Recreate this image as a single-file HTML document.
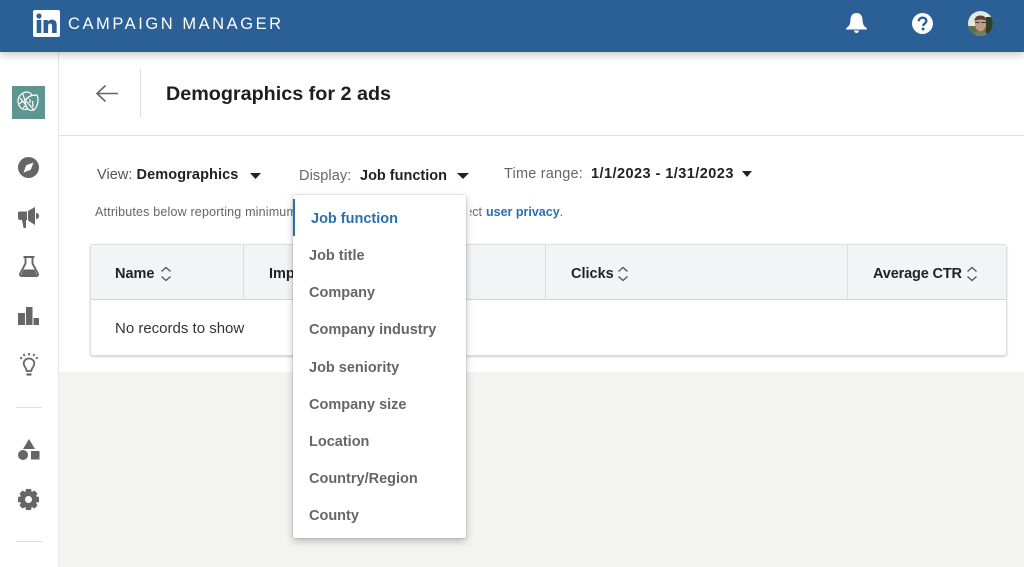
<!DOCTYPE html>
<html><head><meta charset="utf-8"><style>
html,body{margin:0;padding:0;width:1024px;height:567px;overflow:hidden;background:#fff;font-family:"Liberation Sans",sans-serif}
#r{position:relative;width:1024px;height:567px;overflow:hidden}
.a{position:absolute}
.t{position:absolute;white-space:nowrap;line-height:20px;height:20px}
.b{font-weight:700}
.m{font-size:14.5px;color:#666;font-weight:700;left:309px}
.h{font-size:14.5px;font-weight:700;color:#222}
svg{position:absolute;overflow:visible}
</style></head><body><div id="r">
<div class="a" style="left:58px;top:372px;width:966px;height:195px;background:#f3f3f2"></div>
<div class="a" style="left:58px;top:52px;width:1px;height:515px;background:#e6e6e6"></div>
<div class="a" style="left:59px;top:135px;width:965px;height:1px;background:#e0e0e0"></div>
<div class="a" style="left:0;top:0;width:1024px;height:52px;background:#2a6095;box-shadow:0 3px 8px rgba(0,0,0,.22)"></div>

<svg style="left:33px;top:10px" width="27" height="27" viewBox="0 0 27 27"><rect width="27" height="27" rx="2" fill="#fff"/><rect x="3.700" y="10" width="4.600" height="13" fill="#2a6095"/><circle cx="6" cy="6" r="2.600" fill="#2a6095"/><path d="M10.500 10h4.300v1.800c.8-1.300 2.200-2.200 4-2.200 3.500 0 4.900 2.200 4.900 5.600V23h-4.600v-6.800c0-1.600-.5-2.700-2-2.700s-2 1.100-2 2.700V23h-4.600z" fill="#2a6095"/></svg>
<div class="t" style="left:68px;top:14px;font-size:16.5px;color:#fff;letter-spacing:2.550px">CAMPAIGN MANAGER</div>

<svg style="left:846px;top:13px" width="21" height="20" viewBox="0 0 21 20"><path d="M10.500 0C6.800 0 4.700 2.600 4.500 6.500 4.300 10.500 3.500 12.500 1.800 14 .8 14.800 0 15.200 0 16.500h21c0-1.300-.8-1.700-1.800-2.500-1.700-1.500-2.500-3.500-2.700-7.500C16.300 2.600 14.200 0 10.500 0z" fill="#fff"/><path d="M8 17.500h5c-.2 1.500-1.200 2.500-2.500 2.500S8.200 19 8 17.500z" fill="#fff"/></svg>
<svg style="left:912px;top:13px" width="21" height="21" viewBox="0 0 21 21"><circle cx="10.500" cy="10.500" r="10.500" fill="#fff"/><path d="M6.800 8.200c0-2.200 1.700-3.500 3.800-3.500s3.700 1.200 3.700 3.200c0 2.700-3.100 2.700-3.100 5" fill="none" stroke="#2a6095" stroke-width="2.400"/><circle cx="11.100" cy="16" r="1.500" fill="#2a6095"/></svg>
<svg style="left:968px;top:11px" width="25" height="25" viewBox="0 0 25 25"><defs><clipPath id="c"><circle cx="12.500" cy="12.500" r="12.500"/></clipPath></defs><g clip-path="url(#c)"><rect width="25" height="25" fill="#e4e8e0"/><rect y="15" width="25" height="10" fill="#5d6f45"/><path d="M18 6h7v19h-7z" fill="#2f3d2a"/><ellipse cx="12.500" cy="13" rx="5.500" ry="7.500" fill="#c49a80"/><path d="M6.500 10c0-4 3-5.500 6-5.500s6 1.500 6 5.500c-3-2-8-2-12 0z" fill="#5a4336"/><path d="M7 11.500h4.500M13.500 11.500H18" stroke="#333" stroke-width="1"/><path d="M5 25c1-4 4-5 7.500-5s6.500 1 7.500 5z" fill="#6d8068"/></g></svg>

<svg style="left:95px;top:84px" width="24" height="19" viewBox="0 0 24 19"><path d="M23 9.500H2M10.500 1.500 2 9.500l8.500 8" fill="none" stroke="#666" stroke-width="1.600"/></svg>
<div class="a" style="left:140px;top:69px;width:1px;height:49px;background:#e0e0e0"></div>
<div class="t b" style="left:166px;top:84px;font-size:19.75px;color:#1e1e1e">Demographics for 2 ads</div>

<svg style="left:12px;top:86px" width="33" height="33" viewBox="0 0 33 33"><rect width="33" height="33" fill="#5f9590"/><g fill="none" stroke="#fff" stroke-width="1.200"><path d="M6 15c0-4 3-8 8-9 3 0 5 1 6 3-2 1-5 3-7 6 0 3 1 6 3 8-3 1-5 1-7-1-2-2-3-4-3-7z"/><path d="M13 15c2-4 6-6 12-6 2 5 1 11-3 15-3 1-5 0-6-1-2-2-3-5-3-8z"/><path d="M14 15l8 9M18 17v-4M21 21l-.5-6M8 12l6 7M11 8l2 7M7 18l4-3M11 22l3-3"/></g></svg>

<svg style="left:18px;top:157px" width="21" height="21" viewBox="0 0 21 21"><circle cx="10.500" cy="10.500" r="10.500" fill="#666"/><path d="M15.500 5.500 12.800 12.800 5.500 15.500 8.200 8.200z" fill="#fff"/></svg>
<svg style="left:18px;top:207px" width="21" height="21" viewBox="0 0 21 21"><path d="M1.500 4.500H9V13H8V21H5.500L4 13H2C.8 13 0 12 0 11V6C0 5 .6 4.500 1.500 4.500zM10 4 17 0V18L10 13.500zM18 6c2 0 3 1.300 3 3s-1 3-3 3z" fill="#666"/></svg>
<svg style="left:19px;top:256px" width="20" height="21" viewBox="0 0 20 21"><path d="M4.500 1h11M6.500 1v6.500L1.200 17.500C.5 19 1.200 20 2.500 20h15c1.300 0 2-1 1.300-2.500L13.500 7.500V1" fill="none" stroke="#666" stroke-width="1.900"/><path d="M4.500 13.500h11l2.500 5.500H2z" fill="#666"/></svg>
<svg style="left:18px;top:307px" width="21" height="18" viewBox="0 0 21 18"><path d="M0 6h7v12H0zM8 0h6.500v18H8zM15.500 11H21v7h-5.500z" fill="#666"/></svg>
<svg style="left:20px;top:353px" width="18" height="23" viewBox="0 0 18 23"><path d="M9 5.500c-3.200 0-5.300 2.300-5.300 5 0 3.200 2.800 4.200 3 7.500h4.600c.2-3.300 3-4.300 3-7.500 0-2.700-2.100-5-5.300-5z" fill="none" stroke="#666" stroke-width="1.800"/><path d="M6.500 21.500h5" stroke="#666" stroke-width="2.200"/><path d="M9 0v2.500M3.500 1l1.200 2M14.500 1l-1.200 2M0 4.500l2.200 1.100M18 4.500l-2.200 1.100" stroke="#666" stroke-width="1.800"/></svg>
<div class="a" style="left:16px;top:407px;width:26px;height:1px;background:#ddd"></div>
<svg style="left:18px;top:439px" width="21" height="21" viewBox="0 0 21 21"><path d="M11 0 17 10H5z" fill="#666"/><circle cx="5" cy="16" r="5" fill="#666"/><rect x="13" y="12" width="8.500" height="8.500" fill="#666"/></svg>
<svg style="left:18px;top:489px" width="21" height="21" viewBox="0 0 21 21"><path d="M8 0h5l.7 3 2.800-1.500 3 3L18 7.300l3 .7v5l-3 .7 1.500 2.800-3 3-2.800-1.500-.7 3H8l-.7-3-2.800 1.500-3-3L3 13.700 0 13V8l3-.7-1.500-2.800 3-3L7.300 3z" fill="#666"/><circle cx="10.500" cy="10.500" r="3.500" fill="#fff"/></svg>
<div class="a" style="left:16px;top:541px;width:26px;height:1px;background:#ddd"></div>

<div class="t" style="left:97px;top:165px;font-size:14.500px;color:#555;letter-spacing:.05px">View: <span class="b" style="color:#222;letter-spacing:.1px">Demographics</span></div>
<svg style="left:250px;top:173px" width="11" height="6"><path d="M0 0h11L5.500 6z" fill="#222"/></svg>
<div class="t" style="left:299px;top:166px;font-size:14.500px;color:#666;letter-spacing:.1px">Display:</div>
<div class="t b" style="left:360px;top:166px;font-size:14.500px;color:#222">Job function</div>
<svg style="left:457px;top:173px" width="12" height="6"><path d="M0 0h12L6 6z" fill="#222"/></svg>
<div class="t" style="left:504px;top:164px;font-size:14.500px;color:#666;letter-spacing:.2px">Time range:</div>
<div class="t b" style="left:591px;top:164px;font-size:14.500px;color:#222;letter-spacing:.45px">1/1/2023 - 1/31/2023</div>
<svg style="left:742px;top:171px" width="10" height="6"><path d="M0 0h10L5 6z" fill="#222"/></svg>
<div class="t" style="left:95px;top:202px;font-size:12.500px;color:#666;letter-spacing:.18px">Attributes below reporting minimums are hidden to protect</div>
<div class="a" style="left:482px;top:202px;width:12px;height:20px;background:#fff"></div>
<div class="t" style="left:470px;top:202px;font-size:12.500px;color:#666;width:12px;overflow:hidden;direction:rtl">ect</div>
<div class="t b" style="left:486px;top:202px;font-size:12.500px;color:#2a6fb0">user privacy<span style="font-weight:400;color:#666">.</span></div>

<div class="a" style="left:91px;top:245px;width:915px;height:110px;background:#fff;border-radius:2px;box-shadow:0 0 0 1px #dcdcdc,0 1px 2px 1px rgba(0,0,0,.18)"></div>
<div class="a" style="left:91px;top:245px;width:915px;height:54px;background:#f3f4f6;border-bottom:1px solid #d4d4d4"></div>
<div class="a" style="left:243px;top:245px;width:1px;height:54px;background:#dcdcdc"></div>
<div class="a" style="left:545px;top:245px;width:1px;height:54px;background:#dcdcdc"></div>
<div class="a" style="left:847px;top:245px;width:1px;height:54px;background:#dcdcdc"></div>
<div class="t h" style="left:115px;top:264px">Name</div>
<svg style="left:160px;top:266px" width="12" height="16"><path d="M1.500 5.500 6 1.500l4.500 4M1.500 10.500 6 14.500l4.500-4" fill="none" stroke="#555" stroke-width="1.300"/></svg>
<div class="t h" style="left:269px;top:264px">Impressions</div>
<div class="t h" style="left:571px;top:264px">Clicks</div>
<svg style="left:617px;top:266px" width="12" height="16"><path d="M1.500 5.500 6 1.500l4.500 4M1.500 10.500 6 14.500l4.500-4" fill="none" stroke="#555" stroke-width="1.300"/></svg>
<div class="t h" style="left:873px;top:264px;letter-spacing:-.15px">Average CTR</div>
<svg style="left:966px;top:266px" width="12" height="16"><path d="M1.500 5.500 6 1.500l4.500 4M1.500 10.500 6 14.500l4.500-4" fill="none" stroke="#555" stroke-width="1.300"/></svg>
<div class="t" style="left:115px;top:319px;font-size:15px;color:#333">No records to show</div>

<div class="a" style="left:293px;top:195px;width:173px;height:343px;background:#fff;border-radius:2px;box-shadow:0 0 0 1px rgba(0,0,0,.07),0 3px 8px rgba(0,0,0,.25)"></div>
<div class="a" style="left:293px;top:199px;width:2px;height:37px;background:#2a6fb0"></div>
<div class="t m" style="left:311px;top:209px;color:#2a6fb0">Job function</div>
<div class="t m" style="top:246px">Job title</div>
<div class="t m" style="top:283px">Company</div>
<div class="t m" style="top:320px">Company industry</div>
<div class="t m" style="top:358px">Job seniority</div>
<div class="t m" style="top:395px">Company size</div>
<div class="t m" style="top:432px">Location</div>
<div class="t m" style="top:469px">Country/Region</div>
<div class="t m" style="top:506px">County</div>
</div></body></html>
